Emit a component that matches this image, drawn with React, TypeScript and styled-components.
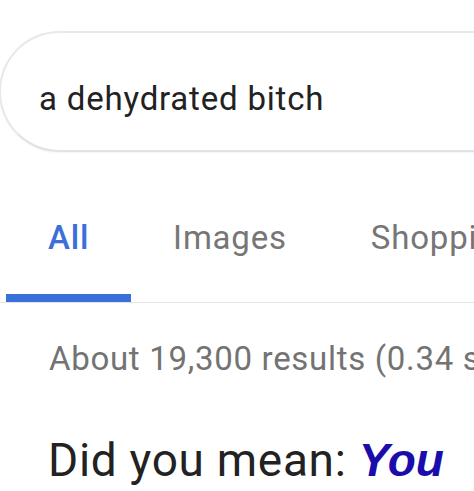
import React from "react";
import styled, { createGlobalStyle } from "styled-components";

const Global = createGlobalStyle`
  html, body { margin: 0; padding: 0; background: #ffffff; overflow: hidden; }
  body { font-family: Roboto, "Liberation Sans", Arial, sans-serif; }
`;

const Page = styled.div`
  width: 474px;
  height: 491px;
  overflow: hidden;
  background: #fff;
  padding-top: 31px;
  box-sizing: border-box;
`;

const SearchBox = styled.div`
  margin-left: -1px;
  width: 560px;
  height: 121px;
  box-sizing: border-box;
  border: 2px solid #e7e7ee;
  border-bottom-color: #e1e1e8;
  border-radius: 61px;
  display: flex;
  align-items: flex-start;
  padding-left: 38px;
  padding-top: 46px;
  box-shadow: 0 1px 2px rgba(60, 64, 67, 0.06);
`;

const Query = styled.span`
  font-family: Roboto, "Liberation Sans", sans-serif;
  font-size: 33px;
  line-height: normal;
  color: #222222;
  letter-spacing: 0.8px;
`;

const TabBar = styled.div`
  margin-top: 66px;
  display: flex;
  padding-left: 6px;
  border-bottom: 1.5px solid #e4e4e4;
  white-space: nowrap;
`;

const Tab = styled.div<{ $active?: boolean }>`
  padding: 0 42px;
  height: 84px;
  display: flex;
  align-items: flex-start;
  font-family: Roboto, "Liberation Sans", sans-serif;
  font-size: 33px;
  line-height: normal;
  letter-spacing: 0.8px;
  font-weight: ${(p) => (p.$active ? 500 : 400)};
  color: ${(p) => (p.$active ? "#3b6fd9" : "#767676")};
  border-bottom: 8px solid ${(p) => (p.$active ? "#3b6fd9" : "transparent")};
  box-sizing: border-box;
  flex-shrink: 0;
`;

const Stats = styled.div`
  padding-left: 49px;
  margin-top: 35.5px;
  font-family: Roboto, "Liberation Sans", sans-serif;
  font-size: 33px;
  line-height: normal;
  letter-spacing: 0.7px;
  color: #737373;
  white-space: nowrap;
`;

const Suggest = styled.div`
  padding-left: 48px;
  margin-top: 55px;
  font-family: Roboto, "Liberation Sans", sans-serif;
  font-size: 46px;
  line-height: normal;
  letter-spacing: 0.7px;
  color: #222222;
  white-space: nowrap;
`;

const Fix = styled.span`
  font-family: "Liberation Sans", Arial, sans-serif;
  font-weight: 700;
  font-style: italic;
  letter-spacing: 0;
  color: #1a0dab;
`;

export default function App() {
  return (
    <>
      <Global />
      <Page>
        <SearchBox>
          <Query>a dehydrated bitch</Query>
        </SearchBox>
        <TabBar>
          <Tab $active>All</Tab>
          <Tab>Images</Tab>
          <Tab>Shopping</Tab>
        </TabBar>
        <Stats>About 19,300 results (0.34 seconds)</Stats>
        <Suggest>
          Did you mean: <Fix>You</Fix>
        </Suggest>
      </Page>
    </>
  );
}
